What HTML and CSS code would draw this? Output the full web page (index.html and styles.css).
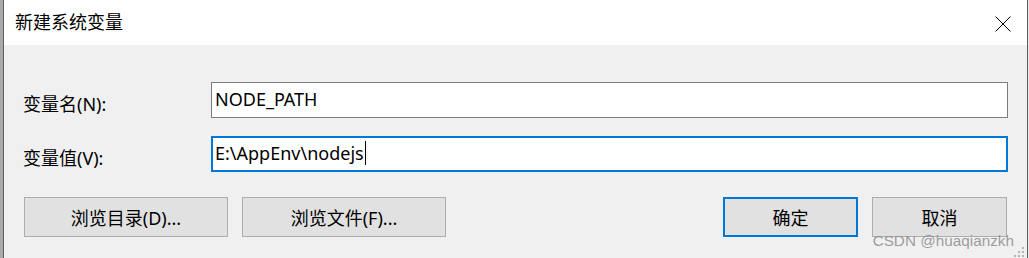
FILE: index.html
```html
<!DOCTYPE html>
<html lang="zh-CN">
<head>
  <meta charset="UTF-8">
  <title>新建系统变量</title>
  <link rel="stylesheet" href="styles.css">
</head>
<body>

<div class="desk">
  <div class="window">
    <!-- Title bar -->
    <div class="titlebar">
      <span class="title">新建系统变量</span>
      <svg class="close" width="16" height="16" viewBox="0 0 16 16">
        <path d="M0.5 0.5 L15.5 15.5 M15.5 0.5 L0.5 15.5" stroke="#000" stroke-width="1" fill="none"/>
      </svg>
    </div>

    <!-- Dialog body -->
    <div class="dialog-body">
      <div class="fields">
        <label class="field-label">变量名(N):</label>
        <div class="textbox">NODE_PATH</div>
        <label class="field-label">变量值(V):</label>
        <div class="textbox focused">E:\AppEnv\nodejs<span class="caret"></span></div>
      </div>

      <div class="actions">
        <div class="group">
          <button class="btn wide">浏览目录(D)...</button>
          <button class="btn wide">浏览文件(F)...</button>
        </div>
        <div class="group">
          <button class="btn default">确定</button>
          <button class="btn">取消</button>
        </div>
      </div>
    </div>

    <div class="watermark">CSDN @huaqianzkh</div>
    <svg class="grip" width="12" height="12" viewBox="0 0 12 12">
      <rect x="9" y="1" width="2" height="2" fill="#b5b5b5"/>
      <rect x="5" y="5" width="2" height="2" fill="#b5b5b5"/>
      <rect x="9" y="5" width="2" height="2" fill="#b5b5b5"/>
      <rect x="1" y="9" width="2" height="2" fill="#b5b5b5"/>
      <rect x="5" y="9" width="2" height="2" fill="#b5b5b5"/>
      <rect x="9" y="9" width="2" height="2" fill="#b5b5b5"/>
    </svg>
  </div>
</div>

</body>
</html>
```

FILE: styles.css
```css
body {
  margin: 0;
  padding: 0;
  font-family: "Noto Sans", "Noto Sans CJK SC", sans-serif;
  font-size: 18px;
  color: #000;
  background-color: #e8e8e8;
}

.desk {
  display: flex;
  width: 1029px;
  height: 258px;
  overflow: hidden;
  border-left: 3px solid #a9a9a9;
  box-sizing: border-box;
}

.window {
  position: relative;
  width: 1025px;
  height: 258px;
  box-sizing: border-box;
  border-left: 1px solid #5f5f5f;
  border-right: 1px solid #5f5f5f;
  background-color: #f0f0f0;
}

.titlebar {
  display: flex;
  justify-content: space-between;
  align-items: center;
  height: 45px;
  padding: 0 16px 0 11px;
  background-color: #fff;
}

.title {
  font-size: 18px;
  line-height: 45px;
}

.close {
  display: block;
  margin-top: 2px;
}

.dialog-body {
  padding: 37px 20px 0 20px;
}

.fields {
  display: grid;
  grid-template-columns: 187px 1fr;
  row-gap: 18px;
}

.field-label {
  align-self: center;
  padding-top: 7px;
  margin-left: -1px;
  line-height: 24px;
}

.textbox {
  height: 36px;
  margin-right: -1px;
  box-sizing: border-box;
  border: 1px solid #7a7a7a;
  background-color: #fff;
  padding-left: 3px;
  line-height: 32px;
  white-space: nowrap;
}

.textbox.focused {
  border: 2px solid #0078d7;
  padding-left: 2px;
  line-height: 30px;
}

.caret {
  display: inline-block;
  width: 1px;
  height: 24px;
  margin-left: 1px;
  background-color: #000;
  vertical-align: -5px;
}

.actions {
  display: flex;
  justify-content: space-between;
  margin-top: 25px;
}

.group {
  display: flex;
  gap: 14px;
}

.btn {
  width: 135px;
  height: 40px;
  box-sizing: border-box;
  border: 1px solid #adadad;
  background-color: #e1e1e1;
  font-family: inherit;
  font-size: 18px;
  color: #000;
  padding: 0;
}

.btn.wide {
  width: 204px;
}

.btn.default {
  border: 2px solid #0078d7;
}

.watermark {
  position: absolute;
  right: 13px;
  bottom: 8px;
  font-family: "Liberation Sans", sans-serif;
  font-size: 15.3px;
  color: rgba(140, 140, 140, 0.85);
}

.grip {
  position: absolute;
  right: 2px;
  bottom: 0;
}
```
